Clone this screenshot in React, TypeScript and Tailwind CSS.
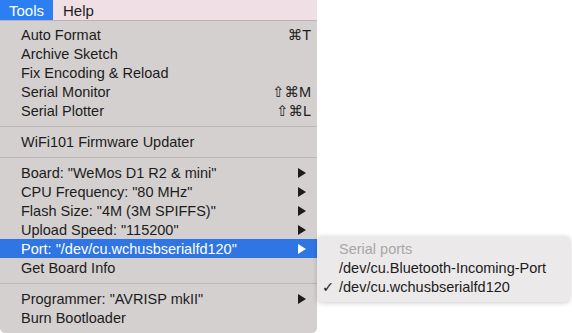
import React from "react";

type Item =
  | { kind: "sep" }
  | { kind: "item"; label: string; shortcut?: string; arrow?: boolean; active?: boolean };

const items: Item[] = [
  { kind: "item", label: "Auto Format", shortcut: "⌘T" },
  { kind: "item", label: "Archive Sketch" },
  { kind: "item", label: "Fix Encoding & Reload" },
  { kind: "item", label: "Serial Monitor", shortcut: "⇧⌘M" },
  { kind: "item", label: "Serial Plotter", shortcut: "⇧⌘L" },
  { kind: "sep" },
  { kind: "item", label: "WiFi101 Firmware Updater" },
  { kind: "sep" },
  { kind: "item", label: 'Board: "WeMos D1 R2 & mini"', arrow: true },
  { kind: "item", label: 'CPU Frequency: "80 MHz"', arrow: true },
  { kind: "item", label: 'Flash Size: "4M (3M SPIFFS)"', arrow: true },
  { kind: "item", label: 'Upload Speed: "115200"', arrow: true },
  { kind: "item", label: 'Port: "/dev/cu.wchusbserialfd120"', arrow: true, active: true },
  { kind: "item", label: "Get Board Info" },
  { kind: "sep" },
  { kind: "item", label: 'Programmer: "AVRISP mkII"', arrow: true },
  { kind: "item", label: "Burn Bootloader" },
];

const Arrow = ({ white }: { white?: boolean }) => (
  <svg width="8" height="10" viewBox="0 0 8 10" className="mr-[11px]">
    <polygon points="0,0 8,5 0,10" fill={white ? "#ffffff" : "#1c1c1c"} />
  </svg>
);

const PortSubmenu = () => (
  <div className="absolute left-[317px] top-[-3px] w-[253px] rounded-[5px] bg-[#ebe9e9] pt-[3px] pb-[6px] shadow-[0_1px_5px_rgba(0,0,0,0.2)] text-[#1c1c1c]">
    <div className="h-[19px] flex items-center pt-[2px] pl-[22px] text-[#a9a7a7]">Serial ports</div>
    <div className="h-[19px] flex items-center pt-[2px] pl-[22px]">/dev/cu.Bluetooth-Incoming-Port</div>
    <div className="h-[19px] flex items-center pt-[2px] pl-[5px]">
      <span className="w-[17px] font-bold">✓</span>/dev/cu.wchusbserialfd120
    </div>
  </div>
);

export default function App() {
  return (
    <div
      className="w-[572px] h-[333px] bg-white overflow-hidden text-[14.5px] text-[#1c1c1c]"
      style={{ fontFamily: '"Liberation Sans", "DejaVu Sans", sans-serif' }}
    >
      <div className="w-[317px] h-[21px] flex items-stretch bg-[#f1dfe6] border-b border-[#bdb3b7]">
        <div className="px-[9px] pt-[2px] flex items-center bg-[#2b7ff3] text-white text-[15px]">Tools</div>
        <div className="px-[10px] pt-[2px] flex items-center text-[15px]">Help</div>
      </div>
      <div className="w-[317px] h-[312px] bg-[#d4d0d0] pt-[4px] rounded-b-[5px]">
        {items.map((it, i) =>
          it.kind === "sep" ? (
            <div key={i} className="pt-[6px] pb-[5px]">
              <div className="h-px bg-[#bcb8b8]" />
            </div>
          ) : (
            <div
              key={i}
              className={
                "relative h-[19px] flex items-center justify-between pl-[21px] " +
                (it.active ? "bg-[#2f76e4] text-white" : "")
              }
            >
              <span className="pt-[2px]">{it.label}</span>
              {it.shortcut && <span className="pt-[2px] pr-[6px]">{it.shortcut}</span>}
              {it.arrow && <Arrow white={it.active} />}
              {it.active && <PortSubmenu />}
            </div>
          )
        )}
      </div>
    </div>
  );
}
